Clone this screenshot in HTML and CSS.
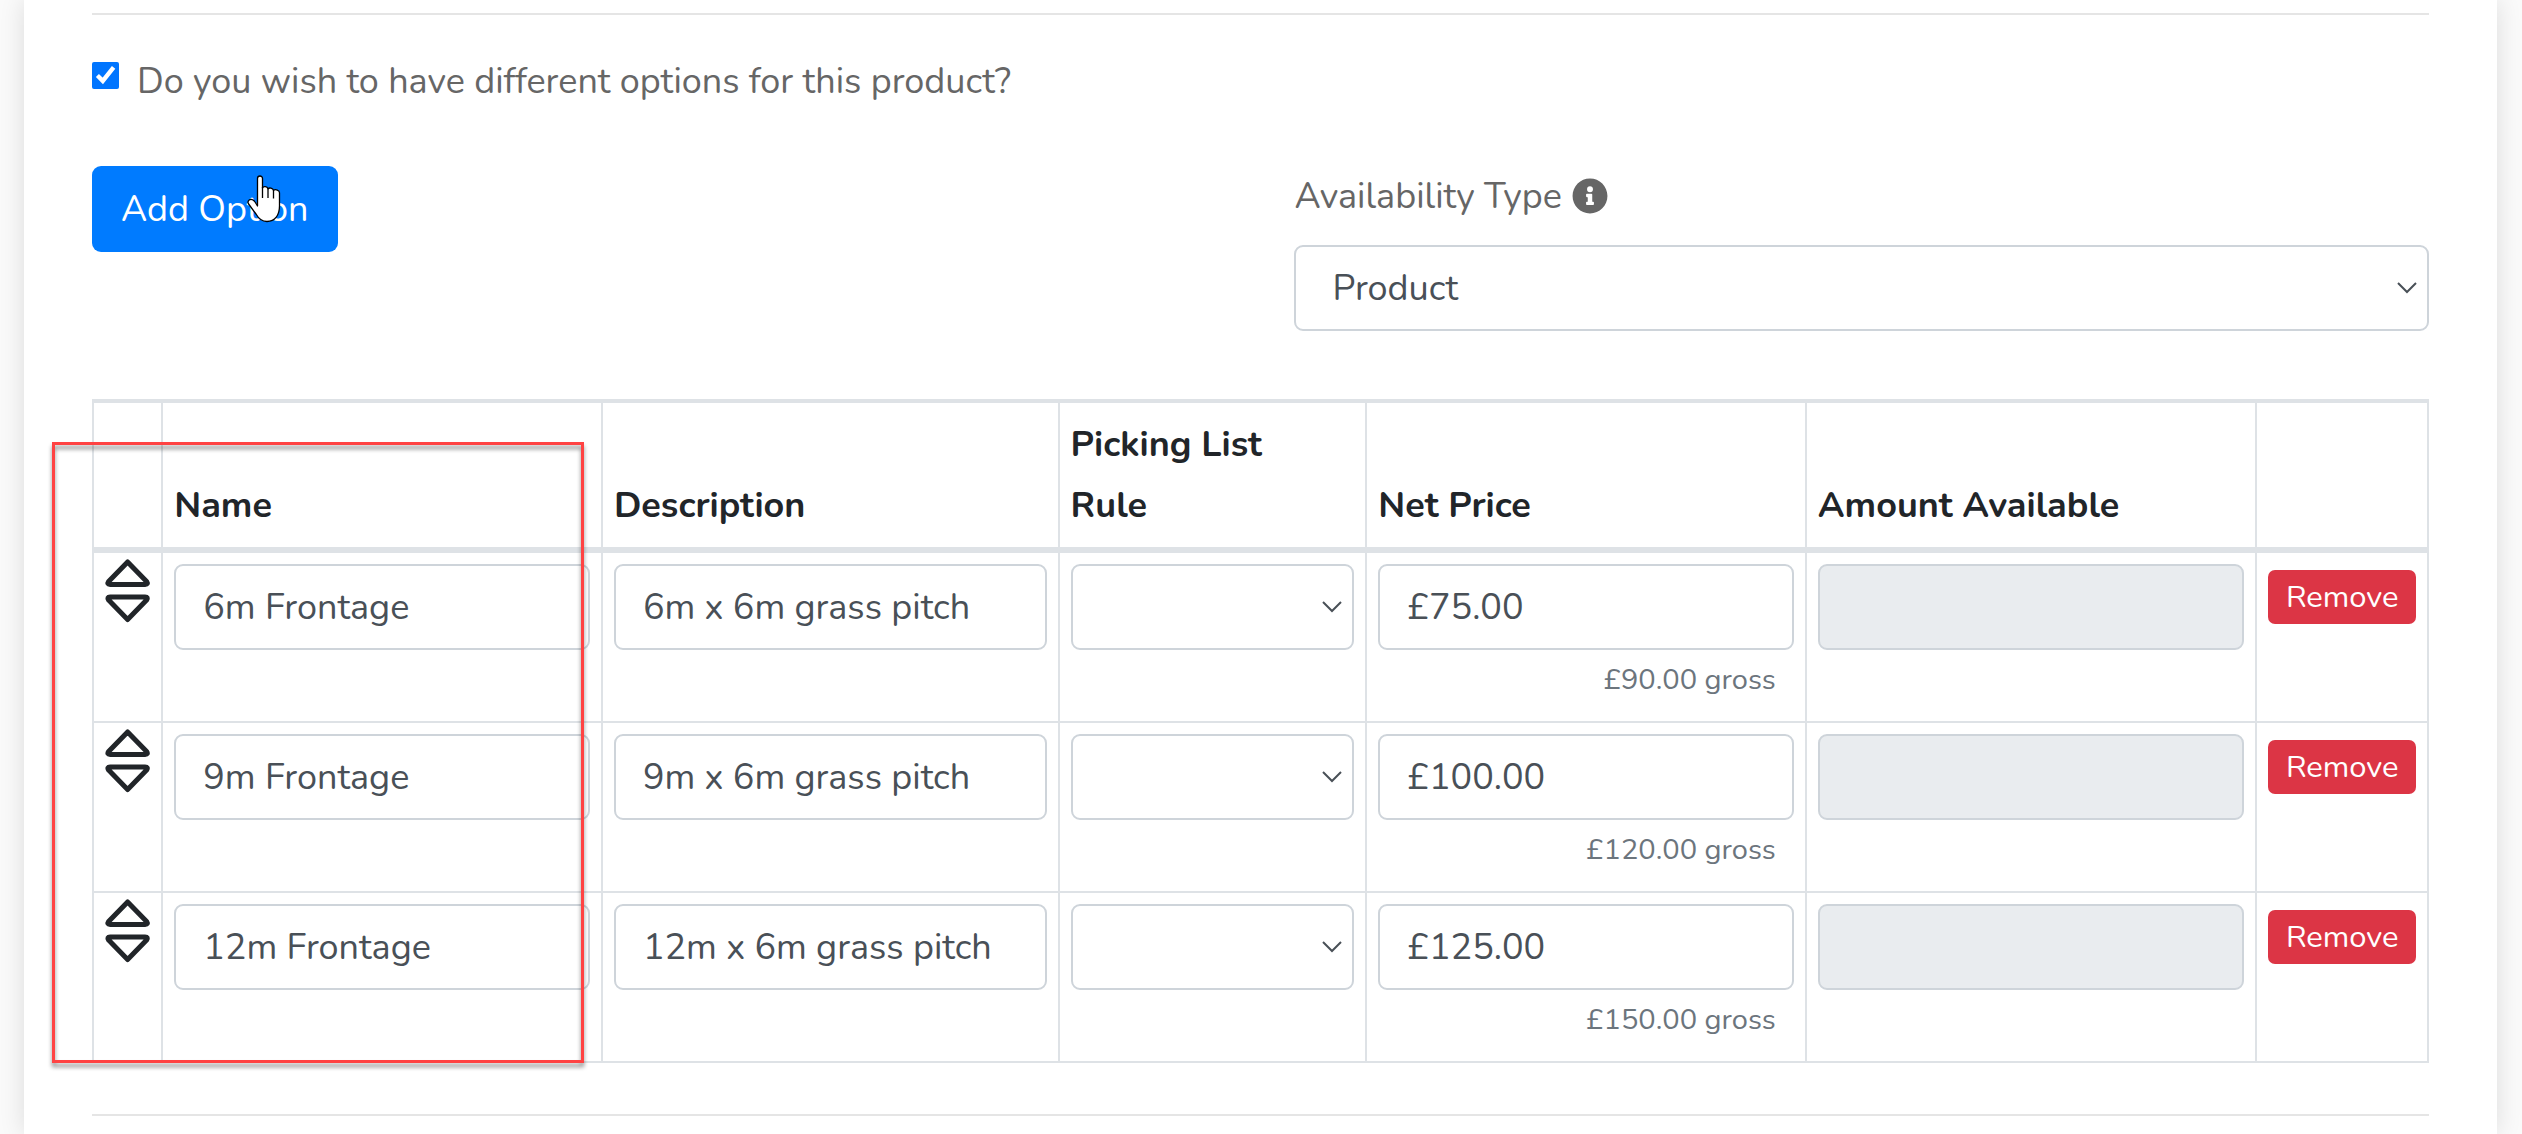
FILE: index.html
```html
<!DOCTYPE html>
<html lang="en">
<head>
<meta charset="utf-8">
<title>Product options</title>
<link rel="stylesheet" href="styles.css">
</head>
<body>
<main class="card">
  <hr class="rule">

  <div class="check">
    <input class="check-box" type="checkbox" id="has-options" checked>
    <label for="has-options">Do you wish to have different options for this product?</label>
  </div>

  <div class="toolbar">
    <div class="toolbar-col">
      <button class="btn btn-primary" type="button">Add Option
        <svg class="pointer" viewBox="0 0 36 48" aria-hidden="true">
          <path d="M10.500 27V3.500a2.500 2.500 0 0 1 5 0V13c.8-2 4.800-1.800 5.500.8 1.200-1.500 5-.8 5.500 1.500 2-1.300 6-.3 6 2.500V31c0 9-4.500 15.500-12.500 15.500-5.500 0-8.500-3-11-7.500L1.300 28.500c-1.200-3 2-5.200 4.700-3.500 2 1.300 3.500 4 4.500 6z" fill="#fff" stroke="#000" stroke-width="1.300" stroke-linejoin="round"/>
          <path d="M15.500 12v11M21 13.500v9.500M26.500 15v8.500" fill="none" stroke="#000" stroke-width="1.300"/>
        </svg>
      </button>
    </div>
    <div class="toolbar-col">
      <label class="field-label" for="availability">Availability Type
        <svg class="info" viewBox="0 0 512 512" aria-hidden="true"><path fill="currentColor" d="M256 8C119 8 8 119 8 256s111 248 248 248 248-111 248-248S393 8 256 8zm0 110a42 42 0 1 1 0 84 42 42 0 0 1 0-84zm56 254c0 6.600-5.400 12-12 12h-88c-6.600 0-12-5.400-12-12v-24c0-6.600 5.400-12 12-12h12v-64h-12c-6.600 0-12-5.400-12-12v-24c0-6.600 5.400-12 12-12h64c6.600 0 12 5.400 12 12v100h12c6.600 0 12 5.400 12 12z"/></svg>
      </label>
      <div class="select-wrap">
        <select class="control control-wide" id="availability"><option>Product</option></select>
        <svg class="chevron" viewBox="0 0 20 12" aria-hidden="true"><path d="M1 1l9 9 9-9"/></svg>
      </div>
    </div>
  </div>

  <div class="options">
    <table class="grid">
      <colgroup><col class="c-sort"><col class="c-name"><col class="c-desc"><col class="c-rule"><col class="c-price"><col class="c-amount"><col class="c-remove"></colgroup>
      <thead>
        <tr><th></th><th>Name</th><th>Description</th><th>Picking List<br>Rule</th><th>Net Price</th><th>Amount Available</th><th></th></tr>
      </thead>
      <tbody>
        <tr>
          <td class="sort"><svg viewBox="0 0 49 66" role="img" aria-label="Reorder"><path d="M24.500 4L43.500 23.500Q45.500 26.500 42 26.500H7Q3.500 26.500 5.500 23.500ZM24.500 61.500L43.500 42Q45.500 39 42 39H7Q3.500 39 5.500 42Z"/></svg></td>
          <td><input class="control" type="text" aria-label="Name" value="6m Frontage"></td>
          <td><input class="control" type="text" aria-label="Description" value="6m x 6m grass pitch"></td>
          <td><div class="select-wrap"><select class="control" aria-label="Picking list rule"><option></option></select><svg class="chevron" viewBox="0 0 20 12" aria-hidden="true"><path d="M1 1l9 9 9-9"/></svg></div></td>
          <td><input class="control" type="text" aria-label="Net price" value="£75.00"><small class="gross">£90.00 gross</small></td>
          <td><input class="control" type="text" aria-label="Amount available" disabled></td>
          <td class="action"><button class="btn btn-danger" type="button">Remove</button></td>
        </tr>
        <tr>
          <td class="sort"><svg viewBox="0 0 49 66" role="img" aria-label="Reorder"><path d="M24.500 4L43.500 23.500Q45.500 26.500 42 26.500H7Q3.500 26.500 5.500 23.500ZM24.500 61.500L43.500 42Q45.500 39 42 39H7Q3.500 39 5.500 42Z"/></svg></td>
          <td><input class="control" type="text" aria-label="Name" value="9m Frontage"></td>
          <td><input class="control" type="text" aria-label="Description" value="9m x 6m grass pitch"></td>
          <td><div class="select-wrap"><select class="control" aria-label="Picking list rule"><option></option></select><svg class="chevron" viewBox="0 0 20 12" aria-hidden="true"><path d="M1 1l9 9 9-9"/></svg></div></td>
          <td><input class="control" type="text" aria-label="Net price" value="£100.00"><small class="gross">£120.00 gross</small></td>
          <td><input class="control" type="text" aria-label="Amount available" disabled></td>
          <td class="action"><button class="btn btn-danger" type="button">Remove</button></td>
        </tr>
        <tr>
          <td class="sort"><svg viewBox="0 0 49 66" role="img" aria-label="Reorder"><path d="M24.500 4L43.500 23.500Q45.500 26.500 42 26.500H7Q3.500 26.500 5.500 23.500ZM24.500 61.500L43.500 42Q45.500 39 42 39H7Q3.500 39 5.500 42Z"/></svg></td>
          <td><input class="control" type="text" aria-label="Name" value="12m Frontage"></td>
          <td><input class="control" type="text" aria-label="Description" value="12m x 6m grass pitch"></td>
          <td><div class="select-wrap"><select class="control" aria-label="Picking list rule"><option></option></select><svg class="chevron" viewBox="0 0 20 12" aria-hidden="true"><path d="M1 1l9 9 9-9"/></svg></div></td>
          <td><input class="control" type="text" aria-label="Net price" value="£125.00"><small class="gross">£150.00 gross</small></td>
          <td><input class="control" type="text" aria-label="Amount available" disabled></td>
          <td class="action"><button class="btn btn-danger" type="button">Remove</button></td>
        </tr>
      </tbody>
    </table>
    <div class="highlight"></div>
  </div>

  <hr class="rule">
</main>
</body>
</html>
```

FILE: styles.css
```css
* { box-sizing: border-box; }

body {
  margin: 0;
  padding: 0 25px 0 24px;
  background: #fafafa;
  color: #212529;
  font-family: Nunito, Lato, sans-serif;
  font-size: 36px;
  line-height: 61px;
}

.card {
  min-height: 100vh;
  padding: 13px 68px 18px;
  background: #fff;
  box-shadow: 0 0 24px rgba(0, 0, 0, .12);
}

.rule {
  height: 2px;
  margin: 0;
  border: 0;
  background: #e5e5e5;
}

.check {
  display: flex;
  align-items: flex-start;
  gap: 18px;
  margin-top: 36px;
  color: #666;
}

.check-box {
  flex: none;
  width: 27px;
  height: 27px;
  margin: 11px 0 0;
  accent-color: #0075ff;
}

.toolbar {
  display: grid;
  grid-template-columns: 1fr 1fr;
  gap: 66px;
  margin-top: 54px;
}

.btn {
  border: 0;
  color: #fff;
  font-family: inherit;
}

.btn-primary {
  position: relative;
  height: 86px;
  padding: 0 30px 0 29px;
  border-radius: 9px;
  background: #007bff;
  font-size: 36px;
}

.btn-danger {
  display: block;
  width: 100%;
  height: 54px;
  padding: 0;
  border-radius: 7px;
  background: #dc3545;
  font-size: 31px;
}

.pointer {
  position: absolute;
  top: 9px;
  right: 55px;
  width: 36px;
  height: 48px;
}

.field-label {
  display: flex;
  align-items: center;
  gap: 10px;
  margin-bottom: 18px;
  padding-left: 1px;
  color: #666;
}

.info {
  width: 36px;
  height: 36px;
  margin-bottom: 2px;
}

.select-wrap { position: relative; }

.control {
  display: block;
  width: 100%;
  height: 86px;
  padding: 0 27px;
  border: 2px solid #ced4da;
  border-radius: 9px;
  background: #fff;
  color: #495057;
  font-family: inherit;
  font-size: 36px;
  appearance: none;
}

.control-wide { padding: 0 37px; }

.control:disabled {
  background: #e9ecef;
  opacity: 1;
}

.chevron {
  position: absolute;
  top: 37px;
  right: 12px;
  width: 20px;
  height: 12px;
  fill: none;
  stroke: #495057;
  stroke-width: 2;
}

.options {
  position: relative;
  margin: 68px 0 51px;
}

.grid {
  width: 100%;
  border-collapse: separate;
  border-spacing: 0;
  border-top: 4px solid #dee2e6;
  border-left: 2px solid #dee2e6;
  table-layout: fixed;
}

.c-sort { width: 69px; }
.c-name { width: 18.83%; }
.c-desc { width: 19.56%; }
.c-rule { width: 13.18%; }
.c-price { width: 18.82%; }
.c-amount { width: 19.3%; }
.c-remove { width: 171px; }

th, td {
  padding: 11px;
  border-right: 2px solid #dee2e6;
  border-bottom: 2px solid #dee2e6;
  text-align: left;
}

th {
  border-bottom-width: 6px;
  font-weight: 700;
  vertical-align: bottom;
}

td {
  height: 170px;
  vertical-align: top;
}

.sort { padding: 5px 9px; }

.sort svg {
  display: block;
  width: 100%;
  height: 66px;
  fill: none;
  stroke: #212529;
  stroke-width: 5;
  stroke-linejoin: round;
}

.action { padding-top: 17px; }

.gross {
  display: block;
  padding-right: 18px;
  color: #6c757d;
  font-size: 29px;
  line-height: 60px;
  text-align: right;
}

.highlight {
  position: absolute;
  top: 43px;
  bottom: 0;
  left: -40px;
  width: 532px;
  border: 3px solid #ff4343;
  filter: drop-shadow(0 4px 2px rgba(0, 0, 0, .45));
  pointer-events: none;
}
```
